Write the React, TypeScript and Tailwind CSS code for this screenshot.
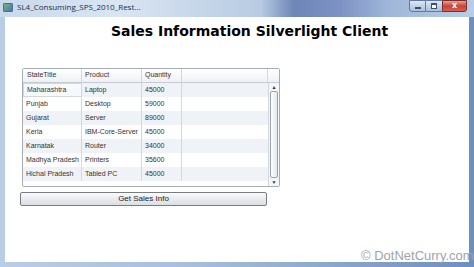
import React from "react";

const rows = [
  ["Maharashtra", "Laptop", "45000"],
  ["Punjab", "Desktop", "59000"],
  ["Gujarat", "Server", "89000"],
  ["Kerla", "IBM-Core-Server", "45000"],
  ["Karnatak", "Router", "34000"],
  ["Madhya Pradesh", "Printers", "35600"],
  ["Hichal Pradesh", "Tabled PC", "45000"],
];

export default function App() {
  return (
    <div
      className="relative w-[474px] h-[267px] flex flex-col overflow-hidden bg-[linear-gradient(90deg,#b9cde6_0%,#a6bfdc_40%,#6d8fbd_100%)]"
      style={{ fontFamily: "'DejaVu Sans', sans-serif" }}
    >
      {/* title bar */}
      <div className="h-[17px] flex items-start shrink-0 bg-[linear-gradient(90deg,#c9d9ec_0%,#d9e5f2_25%,#b8cbe2_55%,#6c86b6_62%,#7e92c4_72%,#9fb7d9_82%,#b9cde6_100%)]">
        <div className="ml-[3px] mt-[3px] w-[10px] h-[9px] rounded-[1px] bg-[linear-gradient(135deg,#7fb07a,#3c7bb7)] border border-[#4d6f8e]" />
        <span
          className="ml-[4px] mt-[2px] text-[8px] leading-[10px] text-[#1b2e4a] whitespace-nowrap"
          style={{ fontFamily: "'Open Sans', sans-serif" }}
        >
          SL4_Consuming_SPS_2010_Rest...
        </span>
        <div className="ml-auto mr-[7px] flex h-[12px]">
          <div className="w-[17px] h-[12px] border border-[#5f7aa0] rounded-bl-[3px] bg-[linear-gradient(180deg,#dde8f4,#a9bed9)] flex items-end justify-center pb-[2px]">
            <div className="w-[6px] h-[2px] bg-white border border-[#3b4f6b]" />
          </div>
          <div className="w-[16px] h-[12px] border-y border-[#5f7aa0] bg-[linear-gradient(180deg,#dde8f4,#a9bed9)] flex items-center justify-center">
            <div className="w-[6px] h-[6px] border border-[#3b4f6b] border-t-2 bg-white" />
          </div>
          <div className="w-[25px] h-[12px] border border-[#7a2f2a] rounded-br-[3px] bg-[linear-gradient(180deg,#e8a093,#c7443a_50%,#d8604f)] flex items-center justify-center text-white text-[8px] font-bold leading-none">
            x
          </div>
        </div>
      </div>

      {/* client */}
      <div className="flex-1 flex mx-[5px] mb-[5px] bg-white flex-col">
        <div className="h-[6px] shrink-0" />
        <div className="flex justify-center">
          <h1 className="ml-[25px] text-[14px] leading-[16px] font-bold text-black whitespace-nowrap">
            Sales Information Silverlight Client
          </h1>
        </div>

        {/* grid */}
        <div
          className="mt-[29px] ml-[17px] w-[258px] h-[119px] border border-[#a5adb8] rounded-[2px] flex flex-col text-[7px] text-[#333] bg-white whitespace-nowrap"
          style={{ fontFamily: "'Liberation Sans', sans-serif" }}
        >
          <div className="h-[14px] flex border-b border-[#c5cbd3] bg-[linear-gradient(180deg,#ffffff,#eef1f4)]">
            <div className="w-[59px] pl-[4px] flex items-center border-r border-[#d3d8de]">StateTitle</div>
            <div className="w-[60px] pl-[3px] flex items-center border-r border-[#d3d8de]">Product</div>
            <div className="w-[40px] pl-[3px] flex items-center border-r border-[#d3d8de]">Quantity</div>
            <div className="w-[86px] border-r border-[#d3d8de]" />
            <div className="flex-1" />
          </div>
          <div className="flex flex-1">
            <div className="flex flex-col w-[245px]">
              {rows.map((r, i) => (
                <div
                  key={i}
                  className={`h-[14px] flex ${i % 2 === 0 ? "bg-[#eff2f6]" : "bg-white"}`}
                >
                  <div
                    className={`w-[59px] pl-[3px] flex items-center border-r border-[#d3d8de] ${
                      i === 0 ? "border border-[#8ea9c1] bg-[#f6f9fb]" : ""
                    }`}
                  >
                    {r[0]}
                  </div>
                  <div className="w-[60px] pl-[3px] flex items-center border-r border-[#d3d8de]">{r[1]}</div>
                  <div className="w-[40px] pl-[3px] flex items-center border-r border-[#d3d8de]">{r[2]}</div>
                  <div className="flex-1" />
                </div>
              ))}
            </div>
            {/* scrollbar */}
            <div className="flex-1 flex flex-col items-center border-l border-[#d3d8de] bg-[#f4f5f7]">
              <div className="h-[8px] flex items-center justify-center text-[5px] leading-none text-[#333]">▲</div>
              <div className="w-[8px] flex-1 rounded-[2px] border border-[#9aa3ae] bg-[linear-gradient(90deg,#ffffff,#e3e7ec)]" />
              <div className="h-[8px] flex items-center justify-center text-[5px] leading-none text-[#333]">▼</div>
            </div>
          </div>
        </div>

        {/* button */}
        <div
          className="mt-[5px] ml-[15px] w-[247px] h-[14px] border border-[#777c84] rounded-[2px] bg-[linear-gradient(180deg,#fbfbfb,#e9ebee_50%,#dcdfe3)] flex items-center justify-center text-[8px] text-[#222]"
          style={{ fontFamily: "'Liberation Sans', sans-serif" }}
        >
          Get Sales Info
        </div>
      </div>

      {/* watermark */}
      <div
        className="absolute left-[361px] top-[248px] text-[13px] leading-[15px] text-[#9ea4ab]"
        style={{ fontFamily: "'Liberation Sans', sans-serif" }}
      >
        © DotNetCurry.com
      </div>
    </div>
  );
}
